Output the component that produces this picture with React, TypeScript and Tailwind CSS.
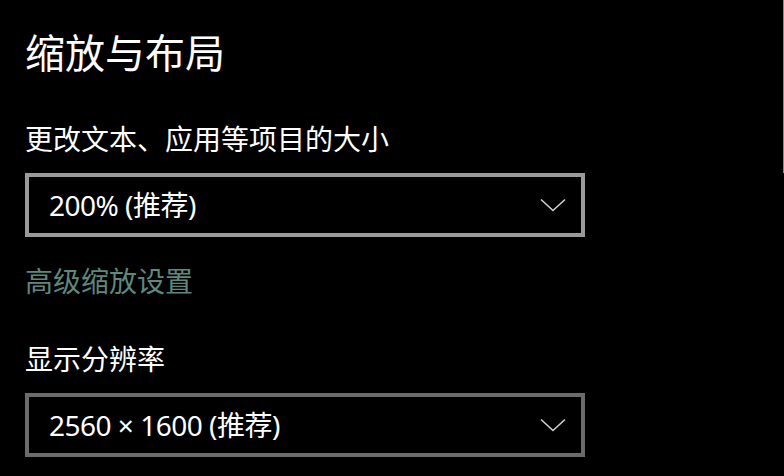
import React from "react";

const FONT = '"Noto Sans", "Noto Sans CJK SC", sans-serif';

function Chevron() {
  return (
    <svg width="26" height="14" viewBox="0 0 26 14" className="shrink-0">
      <path d="M1 1.5 L13 12.5 L25 1.5" fill="none" stroke="#d0d0d0" strokeWidth="1.6" />
    </svg>
  );
}

function Dropdown({ value, border }: { value: string; border: string }) {
  return (
    <div
      className={`w-[560px] h-[64px] border-4 ${border} flex items-center justify-between pl-[20px] pr-[15px]`}
    >
      <span className="text-[28px] leading-[28px] tracking-[-0.5px] text-white">{value}</span>
      <Chevron />
    </div>
  );
}

export default function App() {
  return (
    <div
      className="w-[784px] h-[476px] bg-black overflow-hidden relative"
      style={{ fontFamily: FONT }}
    >
      <div className="absolute right-0 top-0 w-px h-[173px] bg-[#8a8a8a]" />
      <div className="flex flex-col items-start pl-[25px] pt-[33px]">
        <h1 className="text-[40px] leading-[40px] text-white font-normal">缩放与布局</h1>
        <div className="mt-[52px] text-[28px] leading-[28px] text-white">更改文本、应用等项目的大小</div>
        <div className="mt-[20px]">
          <Dropdown value="200% (推荐)" border="border-[#9a9a9a]" />
        </div>
        <div className="mt-[30px] text-[28px] leading-[28px] text-[#5f877d]">高级缩放设置</div>
        <div className="mt-[50px] text-[28px] leading-[28px] text-white">显示分辨率</div>
        <div className="mt-[20px]">
          <Dropdown value="2560 × 1600 (推荐)" border="border-[#6b6b6b]" />
        </div>
      </div>
    </div>
  );
}
